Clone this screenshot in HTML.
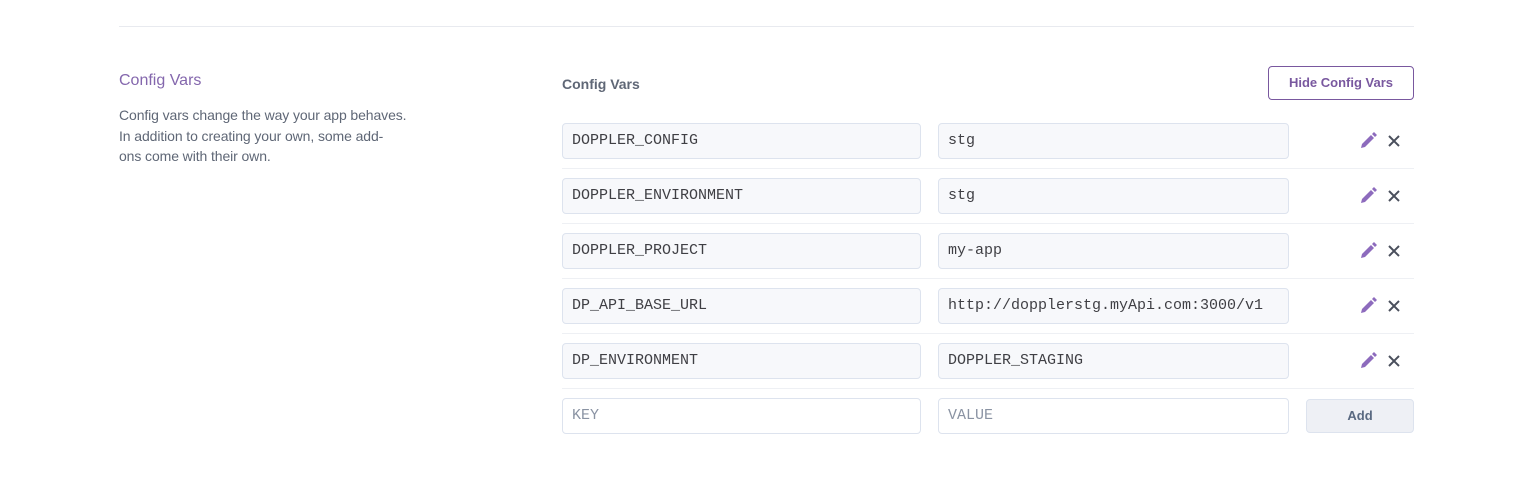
<!DOCTYPE html>
<html><head><style>
body{margin:0;width:1536px;height:501px;background:#fff;font-family:"Liberation Sans",sans-serif;position:relative;overflow:hidden}
.top{position:absolute;left:119px;top:26px;width:1295px;height:1px;background:#e8eaef}
.h{position:absolute;left:119px;top:72px;font-size:16px;color:#8467ad}
.d{position:absolute;left:119px;top:105px;width:340px;font-size:14px;line-height:20.5px;color:#5f6776;letter-spacing:-0.1px}
.t{position:absolute;left:562px;top:76px;font-size:14px;font-weight:bold;color:#5f6776}
.btn{position:absolute;left:1268px;top:66px;width:146px;height:34px;border:1px solid #79589f;border-radius:4px;box-sizing:border-box;color:#79589f;font-size:13px;font-weight:bold;text-align:center;line-height:32px}
.in{position:absolute;height:36px;box-sizing:border-box;border:1px solid #dde3ee;border-radius:4px;background:#f7f8fb;font-family:"Liberation Mono",monospace;font-size:15px;color:#3f3f44;padding-left:9px;line-height:34px}
.k{left:562px;width:359px}.v{left:938px;width:351px}
.e{background:#fff;color:#8a93a3}
.sep{position:absolute;left:562px;width:852px;height:1px;background:#eef0f4}
.ic{position:absolute;left:1358px}
.add{position:absolute;left:1306px;top:399px;width:108px;height:34px;box-sizing:border-box;border:1px solid #dde3ee;border-radius:4px;background:#eef0f5;font-size:13px;font-weight:bold;color:#596981;text-align:center;line-height:32px}
</style></head><body>
<div class="top"></div>
<div class="h">Config Vars</div>
<div class="d">Config vars change the way your app behaves.<br>In addition to creating your own, some add-<br>ons come with their own.</div>
<div class="t">Config Vars</div>
<div class="btn">Hide Config Vars</div>

<div class="in k" style="top:123px">DOPPLER_CONFIG</div><div class="in v" style="top:123px">stg</div>
<div class="sep" style="top:168px"></div>
<div class="in k" style="top:178px">DOPPLER_ENVIRONMENT</div><div class="in v" style="top:178px">stg</div>
<div class="sep" style="top:223px"></div>
<div class="in k" style="top:233px">DOPPLER_PROJECT</div><div class="in v" style="top:233px">my-app</div>
<div class="sep" style="top:278px"></div>
<div class="in k" style="top:288px">DP_API_BASE_URL</div><div class="in v" style="top:288px">http://dopplerstg.myApi.com:3000/v1</div>
<div class="sep" style="top:333px"></div>
<div class="in k" style="top:343px">DP_ENVIRONMENT</div><div class="in v" style="top:343px">DOPPLER_STAGING</div>
<div class="sep" style="top:388px"></div>
<div class="in k e" style="top:398px">KEY</div><div class="in v e" style="top:398px">VALUE</div>
<div class="add">Add</div>

<svg class="ic" style="top:131px" width="44" height="20" viewBox="0 0 44 20"><path d="M3 17l1-4 9-9 3 3-9 9z M14 3l2-2 3 3-2 2z" fill="#8d6bbd"/><path d="M31 5l10 10M41 5L31 15" stroke="#4a4f5c" stroke-width="2"/></svg>
<svg class="ic" style="top:186px" width="44" height="20" viewBox="0 0 44 20"><path d="M3 17l1-4 9-9 3 3-9 9z M14 3l2-2 3 3-2 2z" fill="#8d6bbd"/><path d="M31 5l10 10M41 5L31 15" stroke="#4a4f5c" stroke-width="2"/></svg>
<svg class="ic" style="top:241px" width="44" height="20" viewBox="0 0 44 20"><path d="M3 17l1-4 9-9 3 3-9 9z M14 3l2-2 3 3-2 2z" fill="#8d6bbd"/><path d="M31 5l10 10M41 5L31 15" stroke="#4a4f5c" stroke-width="2"/></svg>
<svg class="ic" style="top:296px" width="44" height="20" viewBox="0 0 44 20"><path d="M3 17l1-4 9-9 3 3-9 9z M14 3l2-2 3 3-2 2z" fill="#8d6bbd"/><path d="M31 5l10 10M41 5L31 15" stroke="#4a4f5c" stroke-width="2"/></svg>
<svg class="ic" style="top:351px" width="44" height="20" viewBox="0 0 44 20"><path d="M3 17l1-4 9-9 3 3-9 9z M14 3l2-2 3 3-2 2z" fill="#8d6bbd"/><path d="M31 5l10 10M41 5L31 15" stroke="#4a4f5c" stroke-width="2"/></svg>
</body></html>
